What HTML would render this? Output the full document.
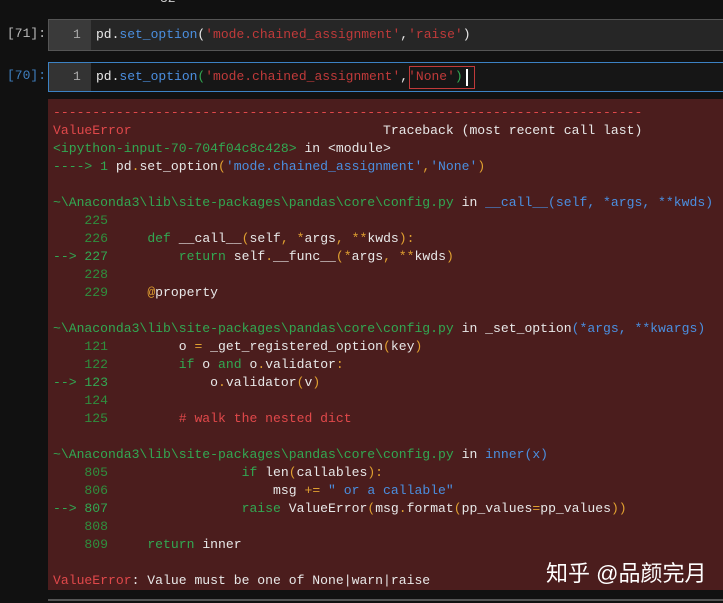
<!DOCTYPE html>
<html><head><meta charset="utf-8"><style>
html,body{margin:0;padding:0;background:#111111;width:723px;height:603px;overflow:hidden;position:relative;font-family:"Liberation Mono",monospace;}
.p{position:absolute;font-size:13px;line-height:18px;white-space:pre;}
.cell{position:absolute;left:48px;right:-2px;box-sizing:border-box;}
.gut{position:absolute;left:0;top:0;bottom:0;width:42px;background:#3a3a3a;}
.err{position:absolute;left:48px;top:99px;width:680px;height:491px;background:#4b1d1d;}
pre{margin:0;position:absolute;left:53px;top:104px;font-family:"Liberation Mono",monospace;font-size:13.1px;line-height:18px;color:#e8e8e8;}
.r{color:#e0484a}.g{color:#32a852}.G{color:#2f8f3e}.b{color:#4b8fe0}.y{color:#e0a030}.w{color:#e8e8e8}.s{color:#c03a3a}
</style></head><body>
<div class="p" style="left:160px;top:-10px;color:#ccc">32</div>
<div class="p" style="left:7px;top:25px;color:#bbb">[71]:</div>
<div class="cell" style="top:19px;height:32px;background:#262626;border:1px solid #555">
 <div class="gut"></div>
 <div class="p" style="left:24px;top:6px;color:#aaa">1</div>
 <div class="p" style="left:47px;top:6px;color:#e8e8e8">pd.<span style="color:#4b8fe0">set_option</span>(<span class="s">'mode.chained_assignment'</span>,<span class="s">'raise'</span>)</div>
</div>
<div class="p" style="left:7px;top:67px;color:#3f7fbf">[70]:</div>
<div class="cell" style="top:62px;height:30px;background:#161616;border:1px solid #3c82c4">
 <div class="gut" style="background:#333"></div>
 <div class="p" style="left:24px;top:5px;color:#aaa">1</div>
 <div class="p" style="left:47px;top:5px;color:#e8e8e8">pd.<span style="color:#4b8fe0">set_option</span><span class="g">(</span><span class="s">'mode.chained_assignment'</span>,<span class="s">'None'</span><span class="g">)</span></div>
 <div style="position:absolute;left:360px;top:3px;width:64px;height:21px;border:1px solid #c03a3a"></div>
 <div style="position:absolute;left:417px;top:6px;width:2px;height:17px;background:#fff"></div>
</div>
<div class="err"></div>
<pre><span class="r">---------------------------------------------------------------------------</span>
<span class="r">ValueError</span>                                Traceback (most recent call last)
<span class="g">&lt;ipython-input-70-704f04c8c428&gt;</span> in <span class="w">&lt;module&gt;</span>
<span class="g">----&gt; 1</span> pd<span class="y">.</span>set_option<span class="y">(</span><span class="b">'mode.chained_assignment'</span><span class="y">,</span><span class="b">'None'</span><span class="y">)</span>

<span class="g">~\Anaconda3\lib\site-packages\pandas\core\config.py</span> in <span class="b">__call__</span><span class="b">(self, *args, **kwds)</span>
<span class="G">    225</span>
<span class="G">    226</span>     <span class="g">def</span> __call__<span class="y">(</span>self<span class="y">,</span> <span class="y">*</span>args<span class="y">,</span> <span class="y">**</span>kwds<span class="y">):</span>
<span class="g">--&gt; 227</span>         <span class="g">return</span> self<span class="y">.</span>__func__<span class="y">(*</span>args<span class="y">,</span> <span class="y">**</span>kwds<span class="y">)</span>
<span class="G">    228</span>
<span class="G">    229</span>     <span class="y">@</span>property

<span class="g">~\Anaconda3\lib\site-packages\pandas\core\config.py</span> in _set_option<span class="b">(*args, **kwargs)</span>
<span class="G">    121</span>         o <span class="y">=</span> _get_registered_option<span class="y">(</span>key<span class="y">)</span>
<span class="G">    122</span>         <span class="g">if</span> o <span class="g">and</span> o<span class="y">.</span>validator<span class="y">:</span>
<span class="g">--&gt; 123</span>             o<span class="y">.</span>validator<span class="y">(</span>v<span class="y">)</span>
<span class="G">    124</span>
<span class="G">    125</span>         <span class="r"># walk the nested dict</span>

<span class="g">~\Anaconda3\lib\site-packages\pandas\core\config.py</span> in <span class="b">inner</span><span class="b">(x)</span>
<span class="G">    805</span>                 <span class="g">if</span> len<span class="y">(</span>callables<span class="y">):</span>
<span class="G">    806</span>                     msg <span class="y">+=</span> <span class="b">" or a callable"</span>
<span class="g">--&gt; 807</span>                 <span class="g">raise</span> ValueError<span class="y">(</span>msg<span class="y">.</span>format<span class="y">(</span>pp_values<span class="y">=</span>pp_values<span class="y">))</span>
<span class="G">    808</span>
<span class="G">    809</span>     <span class="g">return</span> inner

<span class="r">ValueError</span>: Value must be one of None|warn|raise</pre>
<div style="position:absolute;left:546px;top:556px;font-family:'Liberation Sans','Noto Sans CJK SC',sans-serif;font-size:22px;color:#fff;white-space:nowrap">知乎 @品颜完月</div>
<div style="position:absolute;left:48px;top:599px;width:680px;height:2px;background:#555"></div>
</body></html>
